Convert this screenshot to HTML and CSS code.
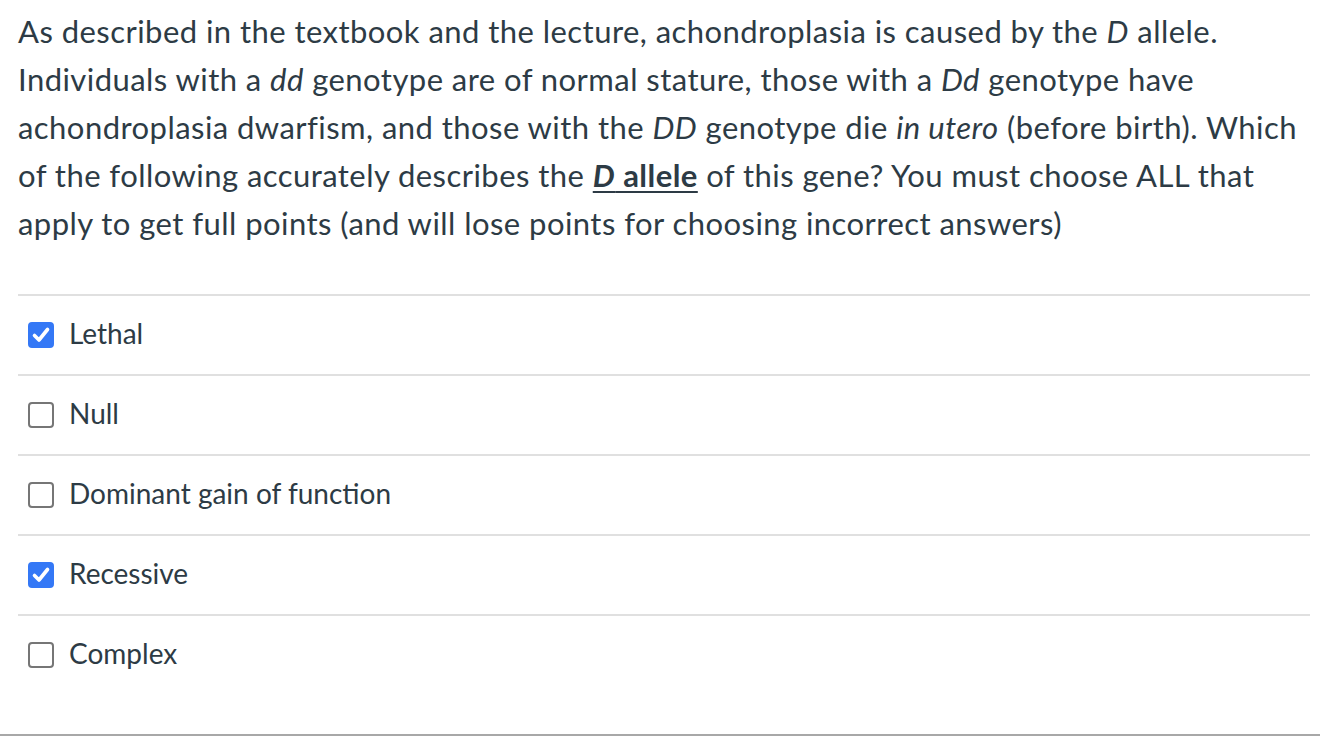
FILE: index.html
```html
<!DOCTYPE html>
<html>
<head>
<meta charset="utf-8">
<link rel="stylesheet" href="styles.css">
</head>
<body>
<div class="question">
  <p class="prompt">As described in the textbook and the lecture, achondroplasia is caused by the <i>D</i> allele.<br>Individuals with a <i>dd</i> genotype are of normal stature, those with a <i>Dd</i> genotype have<br>achondroplasia dwarfism, and those with the <i>DD</i> genotype die <i>in utero</i> (before birth). Which<br>of the following accurately describes the <b><u><i>D</i> allele</u></b> of this gene? You must choose ALL that<br>apply to get full points (and will lose points for choosing incorrect answers)</p>
  <div class="answers">
    <div class="answer"><span class="box checked"><svg viewBox="0 0 26 26" width="26" height="26"><path d="M6.5 13.5 L11 18 L19.5 7.5" fill="none" stroke="#fff" stroke-width="3.6" stroke-linecap="round" stroke-linejoin="round"/></svg></span><span class="label">Lethal</span></div>
    <div class="answer"><span class="box"></span><span class="label">Null</span></div>
    <div class="answer"><span class="box"></span><span class="label">Dominant gain of function</span></div>
    <div class="answer"><span class="box checked"><svg viewBox="0 0 26 26" width="26" height="26"><path d="M6.5 13.5 L11 18 L19.5 7.5" fill="none" stroke="#fff" stroke-width="3.6" stroke-linecap="round" stroke-linejoin="round"/></svg></span><span class="label">Recessive</span></div>
    <div class="answer"><span class="box"></span><span class="label">Complex</span></div>
  </div>
</div>
<div class="footer-rule"></div>
</body>
</html>
```
FILE: styles.css
```css
html, body {
  margin: 0;
  padding: 0;
  background: #fff;
}
body {
  font-family: Lato, "Liberation Sans", sans-serif;
  color: #2d3b45;
  width: 1320px;
  height: 752px;
  overflow: hidden;
}
.question {
  padding: 7px 10px 0 18px;
}
.prompt {
  margin: 0;
  font-size: 31px;
  letter-spacing: 0.45px;
  line-height: 48px;
  white-space: nowrap;
}
.prompt u {
  text-decoration-thickness: 2px;
  text-underline-offset: 4px;
}
.answers {
  margin-top: 47px;
}
.answer {
  display: flex;
  align-items: center;
  height: 78px;
  border-top: 2px solid #e0e0e0;
  padding-left: 10px;
  gap: 15px;
}
.box {
  width: 22px;
  height: 22px;
  border: 2px solid #767676;
  border-radius: 4px;
  box-sizing: content-box;
  flex: none;
  position: relative;
}
.box.checked {
  background: #3478f6;
  border-color: #3478f6;
}
.box svg {
  position: absolute;
  left: -2px;
  top: -2px;
}
.label {
  font-size: 28px;
  line-height: 32px;
  padding-bottom: 5px;
}
.footer-rule {
  margin-top: 40px;
  height: 2px;
  background: #a8a8a8;
}
```
